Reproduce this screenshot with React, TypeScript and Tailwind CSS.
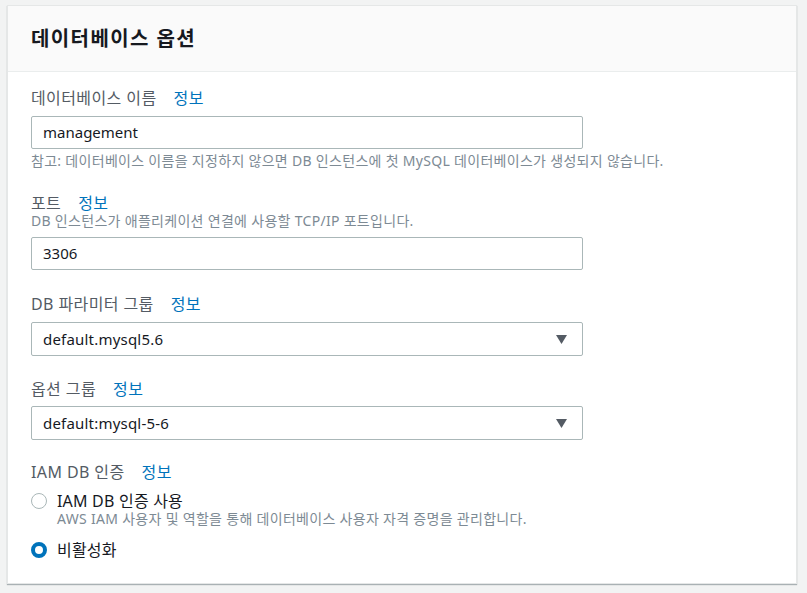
import React from "react";

const font = { fontFamily: '"Noto Sans", "Noto Sans CJK KR", sans-serif' };

function Info() {
  return <span className="ml-[17px] text-[#0073bb]">정보</span>;
}

function Label({ text }: { text: string }) {
  return (
    <div className="text-[16px] leading-[20px] tracking-[0.4px] text-[#545b64]">
      {text}
      <Info />
    </div>
  );
}

function Input({ value }: { value: string }) {
  return (
    <div className="flex h-[33px] w-[552px] items-center rounded-[2px] border border-[#aab7b8] bg-white pl-[11px] text-[15px] text-[#16191f]">
      {value}
    </div>
  );
}

function Select({ value }: { value: string }) {
  return (
    <div className="flex h-[34px] w-[552px] items-center justify-between rounded-[2px] border border-[#aab7b8] bg-white pl-[11px] pr-[15px] text-[15px] tracking-[0.2px] text-[#16191f]">
      <span>{value}</span>
      <svg width="11" height="9" viewBox="0 0 11 9">
        <polygon points="0,0 11,0 5.5,9" fill="#545b64" />
      </svg>
    </div>
  );
}

export default function App() {
  return (
    <div className="min-h-[593px] w-[807px] bg-[#f2f3f3] pl-[7px] pr-[10px] pt-[5px]" style={font}>
      <div className="h-[579px] border border-[#e5e7e7] bg-white shadow-[0_1px_1px_0_rgba(0,28,36,0.3)]">
        <div className="flex h-[66px] items-center border-b border-[#eaeded] bg-[#fafafa] pl-[23px] pt-[1px]">
          <h2 className="text-[20px] font-bold tracking-[1.4px] text-[#16191f]">데이터베이스 옵션</h2>
        </div>
        <div className="pl-[23px] pt-[16px]">
          <Label text="데이터베이스 이름" />
          <div className="mt-[8px]">
            <Input value="management" />
          </div>
          <div className="mt-[3px] text-[14px] leading-[18px] tracking-[0.3px] text-[#7d8a94]">
            참고: 데이터베이스 이름을 지정하지 않으면 DB 인스턴스에 첫 MySQL 데이터베이스가 생성되지 않습니다.
          </div>

          <div className="mt-[23px]">
            <Label text="포트" />
          </div>
          <div className="text-[14px] leading-[16px] tracking-[0.3px] text-[#7d8a94]">
            DB 인스턴스가 애플리케이션 연결에 사용할 TCP/IP 포트입니다.
          </div>
          <div className="mt-[8px]">
            <Input value="3306" />
          </div>

          <div className="mt-[24px]">
            <Label text="DB 파라미터 그룹" />
          </div>
          <div className="mt-[8px]">
            <Select value="default.mysql5.6" />
          </div>

          <div className="mt-[23px]">
            <Label text="옵션 그룹" />
          </div>
          <div className="mt-[7px]">
            <Select value="default:mysql-5-6" />
          </div>

          <div className="mt-[22px]">
            <Label text="IAM DB 인증" />
          </div>
          <div className="mt-[9px] flex items-start">
            <div className="mt-[2px] h-[16px] w-[16px] rounded-full border border-[#aab7b8] bg-white" />
            <div className="ml-[10px]">
              <div className="text-[16px] leading-[20px] tracking-[0.2px] text-[#16191f]">IAM DB 인증 사용</div>
              <div className="text-[14px] leading-[16px] tracking-[0.3px] text-[#7d8a94]">
                AWS IAM 사용자 및 역할을 통해 데이터베이스 사용자 자격 증명을 관리합니다.
              </div>
            </div>
          </div>
          <div className="mt-[13px] flex items-start">
            <div className="mt-[2px] h-[16px] w-[16px] rounded-full border-[4px] border-[#0073bb] bg-white" />
            <div className="ml-[10px] text-[16px] leading-[20px] tracking-[0.2px] text-[#16191f]">비활성화</div>
          </div>
        </div>
      </div>
    </div>
  );
}
